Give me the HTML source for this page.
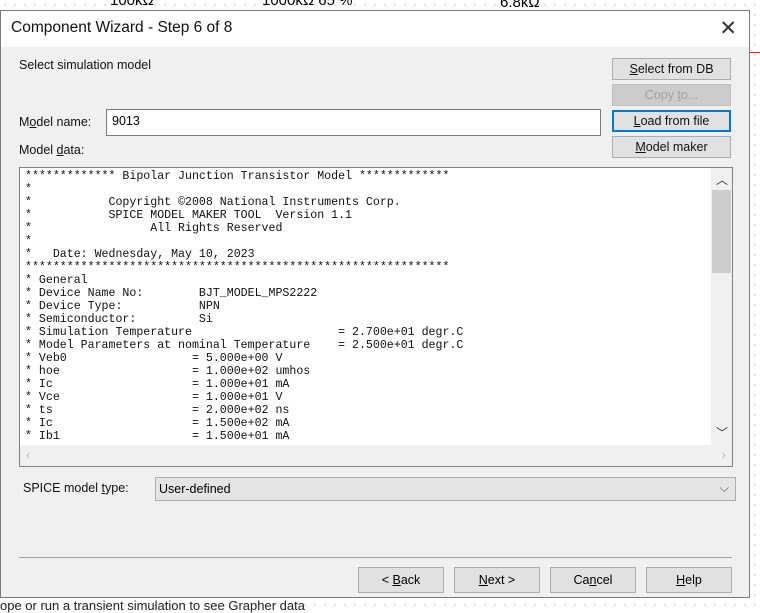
<!DOCTYPE html>
<html><head><meta charset="utf-8"><style>
body{margin:0;width:760px;height:611px;overflow:hidden;background:#fff;font-family:"Liberation Sans","Noto Sans CJK SC",sans-serif;position:relative;
background-image:radial-gradient(#9a9a9a 0.6px,transparent 0.8px);background-size:10px 10px}
.dlg{position:absolute;left:0;top:10px;width:750px;height:588px;background:#f0f0f0;border:1px solid #7a7a7a;box-sizing:border-box}
.title{position:absolute;left:0;top:0;width:748px;height:36px;background:#fff}
.title span{position:absolute;left:10px;top:8px;font-size:15.5px;color:#111}
.x{position:absolute;right:12px;top:5px;font-size:21px;color:#333;font-weight:100;font-family:"DejaVu Sans",sans-serif}
.lbl{position:absolute;font-size:12.5px;color:#111}
.btn{position:absolute;left:611px;width:119px;height:22px;background:#e1e1e1;border:1px solid #adadad;box-sizing:border-box;font-size:12.5px;text-align:center;line-height:20px;color:#111}
.inp{position:absolute;left:105px;top:98px;width:495px;height:27px;background:#fff;border:1px solid #7a7a7a;box-sizing:border-box;font-size:12.5px;padding:4px 5px}
.ta{position:absolute;left:18px;top:156px;width:714px;height:300px;background:#fff;border:1px solid #828282;box-sizing:border-box}
pre{position:absolute;left:5px;top:2px;margin:0;font-family:"Liberation Mono",monospace;font-size:11.6px;line-height:13px;color:#111}
.vs{position:absolute;right:0;top:0;width:21px;height:278px;background:#f0f0f0}
.thumb{position:absolute;left:1px;top:22px;width:19px;height:83px;background:#cdcdcd}
.hs{position:absolute;left:0;bottom:0;width:712px;height:21px;background:#f0f0f0}
.sel{position:absolute;left:154px;top:466px;width:581px;height:24px;background:#e5e5e5;border:1px solid #adadad;box-sizing:border-box;font-size:12.5px;padding:4px 3px}
.b2{position:absolute;top:556px;width:86px;height:26px;background:#e1e1e1;border:1px solid #adadad;box-sizing:border-box;font-size:12.5px;text-align:center;line-height:24px}
u{text-decoration:underline}
</style></head><body>
<div style="position:absolute;left:110px;top:-8px;font-size:15px">100kΩ</div>
<div style="position:absolute;left:262px;top:-8px;font-size:15px">1000kΩ  65 %</div>
<div style="position:absolute;left:500px;top:-6px;font-size:15px">6.8kΩ</div>
<div style="position:absolute;left:750px;top:52px;width:10px;height:1px;background:#c33"></div>
<div style="position:absolute;left:0;top:598px;font-size:13px;color:#222">ope or run a transient simulation to see Grapher data</div>
<div class="dlg">
<div class="title"><span>Component Wizard - Step 6 of 8</span><div class="x">✕</div></div>
<div class="lbl" style="left:18px;top:47px">Select simulation model</div>
<div class="btn" style="top:47px"><u>S</u>elect from DB</div>
<div class="btn" style="top:73px;color:#a0a0a0;background:#ccc;border-color:#bfbfbf">Copy <u>t</u>o...</div>
<div class="btn" style="top:99px;border:2px solid #0078d7;line-height:18px"><u>L</u>oad from file</div>
<div class="btn" style="top:125px"><u>M</u>odel maker</div>
<div class="lbl" style="left:18px;top:104px">M<u>o</u>del name:</div>
<div class="inp">9013</div>
<div class="lbl" style="left:18px;top:132px">Model <u>d</u>ata:</div>
<div class="ta"><pre>************* Bipolar Junction Transistor Model *************
*
*           Copyright ©2008 National Instruments Corp.
*           SPICE MODEL MAKER TOOL  Version 1.1
*                 All Rights Reserved
*
*   Date: Wednesday, May 10, 2023
*************************************************************
* General
* Device Name No:        BJT_MODEL_MPS2222
* Device Type:           NPN
* Semiconductor:         Si
* Simulation Temperature                     = 2.700e+01 degr.C
* Model Parameters at nominal Temperature    = 2.500e+01 degr.C
* Veb0                  = 5.000e+00 V
* hoe                   = 1.000e+02 umhos
* Ic                    = 1.000e+01 mA
* Vce                   = 1.000e+01 V
* ts                    = 2.000e+02 ns
* Ic                    = 1.500e+02 mA
* Ib1                   = 1.500e+01 mA</pre>
<div class="vs"><div style="position:absolute;left:5px;top:3px;font-size:12px;color:#333">︿</div><div class="thumb"></div><div style="position:absolute;left:5px;top:256px;font-size:12px;color:#333">﹀</div></div>
<div class="hs"><div style="position:absolute;left:6px;top:2px;color:#bbb;font-size:13px">‹</div><div style="position:absolute;right:6px;top:2px;color:#bbb;font-size:13px">›</div></div>
</div>
<div class="lbl" style="left:22px;top:470px">SPICE model <u>t</u>ype:</div>
<div class="sel">User-defined<span style="position:absolute;right:6px;top:3px;color:#555">⌵</span></div>
<div style="position:absolute;left:18px;top:546px;width:713px;height:1px;background:#a0a0a0"></div>
<div class="b2" style="left:357px">&lt; <u>B</u>ack</div>
<div class="b2" style="left:453px"><u>N</u>ext &gt;</div>
<div class="b2" style="left:549px">Ca<u>n</u>cel</div>
<div class="b2" style="left:645px"><u>H</u>elp</div>
</div>
</body></html>
